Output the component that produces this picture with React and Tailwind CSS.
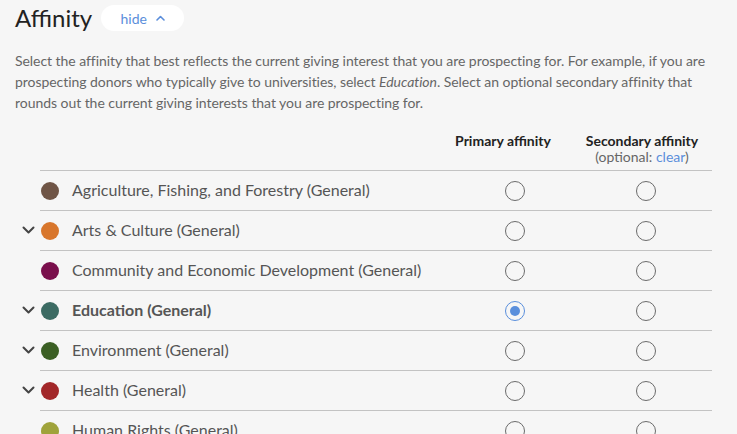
import React from "react";

const rows = [
  { label: "Agriculture, Fishing, and Forestry (General)", color: "#6f5546", chevron: false },
  { label: "Arts & Culture (General)", color: "#d8762c", chevron: true },
  { label: "Community and Economic Development (General)", color: "#7a0f4c", chevron: false },
  { label: "Education (General)", color: "#3c6b63", chevron: true, bold: true, primary: true },
  { label: "Environment (General)", color: "#3b5f24", chevron: true },
  { label: "Health (General)", color: "#a22729", chevron: true },
  { label: "Human Rights (General)", color: "#9fa33b", chevron: false },
];

function Radio({ checked }) {
  return checked ? (
    <span className="flex h-[20px] w-[20px] items-center justify-center rounded-full border-[1.5px] border-[#5a8fdc]">
      <span className="h-[10px] w-[10px] rounded-full bg-[#5a8fdc]" />
    </span>
  ) : (
    <span className="block h-[20px] w-[20px] rounded-full border-[1.5px] border-[#6b6b6b]" />
  );
}

function ChevronDown() {
  return (
    <svg width="13" height="8" viewBox="0 0 13 8" fill="none">
      <path
        d="M1.5 1.5 L6.5 6.5 L11.5 1.5"
        stroke="currentColor"
        strokeWidth="2"
        strokeLinecap="round"
        strokeLinejoin="round"
      />
    </svg>
  );
}

function ChevronUp() {
  return (
    <svg width="9" height="6" viewBox="0 0 9 6" fill="none">
      <path
        d="M1 5 L4.5 1.5 L8 5"
        stroke="currentColor"
        strokeWidth="1.6"
        strokeLinecap="round"
        strokeLinejoin="round"
      />
    </svg>
  );
}

export default function App() {
  return (
    <div className="h-[434px] w-[737px] overflow-hidden bg-[#f6f6f6] font-['Lato','Liberation_Sans',sans-serif]">
      <div className="flex h-[26px] items-center gap-[9px] pl-[15px] mt-[5px]">
        <h1 className="text-[24px] leading-none text-[#222]">Affinity</h1>
        <button className="flex h-[26px] w-[83px] items-center justify-center gap-[9px] rounded-full bg-white text-[14px] text-[#5b8edb]">
          <span>hide</span>
          <span className="text-[#5b8edb]">
            <ChevronUp />
          </span>
        </button>
      </div>
      <p className="mt-[19px] pl-[15px] pr-[4px] text-[14px] leading-[21px] tracking-[-0.05px] text-[#666]">
        Select the affinity that best reflects the current giving interest that you are prospecting for. For example, if you are
        prospecting donors who typically give to universities, select <em>Education</em>. Select an optional secondary affinity that
        rounds out the current giving interests that you are prospecting for.
      </p>
      <div className="mt-[20px] pl-[40px]">
        <div className="flex w-[672px] items-start">
          <div className="flex-1" />
          <div className="w-[130px] pr-[24px] text-center text-[14px] font-bold leading-[16px] text-[#222]">
            Primary affinity
          </div>
          <div className="w-[132px] pr-[8px] text-center text-[14px] leading-[16px] text-[#222]">
            <div className="font-bold">Secondary affinity</div>
            <div className="text-[#666]">
              (optional: <span className="text-[#5b8edb]">clear</span>)
            </div>
          </div>
        </div>
      </div>
      <div className="mt-[5px] pl-[15px]">
        {rows.map((r) => (
          <div key={r.label} className="flex">
            <div className="flex w-[25px] items-center pl-[7px] text-[#444]">
              {r.chevron && <ChevronDown />}
            </div>
            <div className="flex h-[40px] w-[672px] items-center border-t border-[#c3c3c3]">
              <span className="ml-[1px] h-[18px] w-[18px] rounded-full" style={{ background: r.color }} />
              <span className={`ml-[13px] mb-[2px] flex-1 text-[16px] leading-[20px] text-[#555] ${r.bold ? "font-bold" : ""}`}>{r.label}</span>
              <div className="flex w-[130px] justify-center">
                <Radio checked={!!r.primary} />
              </div>
              <div className="flex w-[132px] justify-center">
                <Radio />
              </div>
            </div>
          </div>
        ))}
      </div>
    </div>
  );
}
